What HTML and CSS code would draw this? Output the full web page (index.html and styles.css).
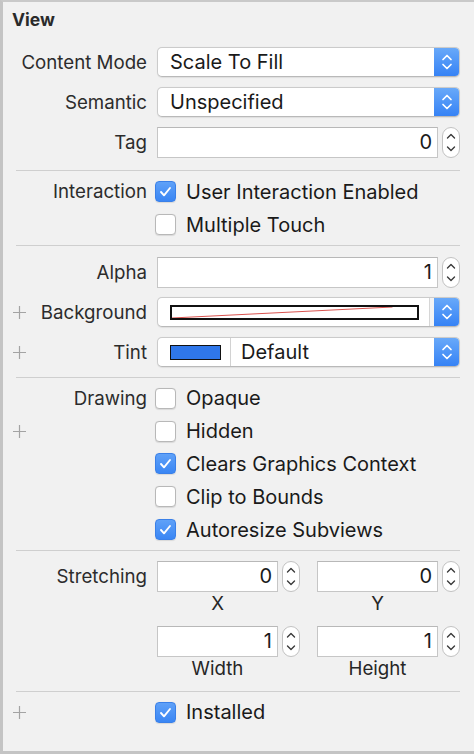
FILE: index.html
```html
<!DOCTYPE html>
<html>
<head>
<meta charset="utf-8">
<link rel="stylesheet" href="styles.css">
</head>
<body>
<div class="panel">
  <div class="header">View</div>

  <div class="section s1">
    <div class="row">
      <div class="label"><span class="label-text">Content Mode</span></div>
      <div class="popup"><span class="popup-text">Scale To Fill</span><span class="popup-arrow"><svg width="26" height="30" viewBox="0 0 26 30"><path d="M9 12.5 L13 8.5 L17 12.5 M9 17.5 L13 21.5 L17 17.5" fill="none" stroke="#fff" stroke-width="1.7" stroke-linecap="round" stroke-linejoin="round"/></svg></span></div>
    </div>
    <div class="row">
      <div class="label"><span class="label-text">Semantic</span></div>
      <div class="popup"><span class="popup-text">Unspecified</span><span class="popup-arrow"><svg width="26" height="30" viewBox="0 0 26 30"><path d="M9 12.5 L13 8.5 L17 12.5 M9 17.5 L13 21.5 L17 17.5" fill="none" stroke="#fff" stroke-width="1.7" stroke-linecap="round" stroke-linejoin="round"/></svg></span></div>
    </div>
    <div class="row">
      <div class="label"><span class="label-text">Tag</span></div>
      <div class="numfield"><span class="field">0</span><span class="stepper"><svg width="18" height="31" viewBox="0 0 18 31"><path d="M5.5 11 L9 7.5 L12.5 11 M5.5 20 L9 23.5 L12.5 20" fill="none" stroke="#3a3a3a" stroke-width="1.4" stroke-linecap="round" stroke-linejoin="round"/></svg></span></div>
    </div>
  </div>
  <div class="sep"></div>

  <div class="section s2">
    <div class="crow">
      <div class="label"><span class="label-text">Interaction</span></div>
      <span class="cb on"><svg width="21" height="21" viewBox="0 0 21 21"><path d="M6 11 L9 14.3 L15 7" fill="none" stroke="#fff" stroke-width="1.9" stroke-linecap="round" stroke-linejoin="round"/></svg></span>
      <span class="ctext">User Interaction Enabled</span>
    </div>
    <div class="crow">
      <div class="label"></div>
      <span class="cb"></span>
      <span class="ctext">Multiple Touch</span>
    </div>
  </div>
  <div class="sep"></div>

  <div class="section s3">
    <div class="row">
      <div class="label"><span class="label-text">Alpha</span></div>
      <div class="numfield"><span class="field">1</span><span class="stepper"><svg width="18" height="31" viewBox="0 0 18 31"><path d="M5.5 11 L9 7.5 L12.5 11 M5.5 20 L9 23.5 L12.5 20" fill="none" stroke="#3a3a3a" stroke-width="1.4" stroke-linecap="round" stroke-linejoin="round"/></svg></span></div>
    </div>
    <div class="row">
      <div class="label"><span class="plus"><svg width="13" height="13" viewBox="0 0 13 13"><path d="M6.5 0 V13 M0 6.5 H13" stroke="#a3a3a3" stroke-width="1.2"/></svg></span><span class="label-text">Background</span></div>
      <div class="popup">
        <span class="well"><span class="clear-swatch"><svg width="100%" height="100%" viewBox="0 0 100 10" preserveAspectRatio="none"><line x1="0" y1="10" x2="90" y2="0" stroke="#d9534f" stroke-width="1" vector-effect="non-scaling-stroke"/></svg></span></span>
        <span class="well-gap"></span>
        <span class="popup-arrow"><svg width="26" height="30" viewBox="0 0 26 30"><path d="M9 12.5 L13 8.5 L17 12.5 M9 17.5 L13 21.5 L17 17.5" fill="none" stroke="#fff" stroke-width="1.7" stroke-linecap="round" stroke-linejoin="round"/></svg></span>
      </div>
    </div>
    <div class="row">
      <div class="label"><span class="plus"><svg width="13" height="13" viewBox="0 0 13 13"><path d="M6.5 0 V13 M0 6.5 H13" stroke="#a3a3a3" stroke-width="1.2"/></svg></span><span class="label-text">Tint</span></div>
      <div class="popup">
        <span class="tint-well"><span class="tint-swatch"></span></span>
        <span class="popup-text">Default</span>
        <span class="popup-arrow"><svg width="26" height="30" viewBox="0 0 26 30"><path d="M9 12.5 L13 8.5 L17 12.5 M9 17.5 L13 21.5 L17 17.5" fill="none" stroke="#fff" stroke-width="1.7" stroke-linecap="round" stroke-linejoin="round"/></svg></span>
      </div>
    </div>
  </div>
  <div class="sep"></div>

  <div class="section s4">
    <div class="crow">
      <div class="label"><span class="label-text">Drawing</span></div>
      <span class="cb"></span>
      <span class="ctext">Opaque</span>
    </div>
    <div class="crow">
      <div class="label"><span class="plus"><svg width="13" height="13" viewBox="0 0 13 13"><path d="M6.5 0 V13 M0 6.5 H13" stroke="#a3a3a3" stroke-width="1.2"/></svg></span></div>
      <span class="cb"></span>
      <span class="ctext">Hidden</span>
    </div>
    <div class="crow">
      <div class="label"></div>
      <span class="cb on"><svg width="21" height="21" viewBox="0 0 21 21"><path d="M6 11 L9 14.3 L15 7" fill="none" stroke="#fff" stroke-width="1.9" stroke-linecap="round" stroke-linejoin="round"/></svg></span>
      <span class="ctext">Clears Graphics Context</span>
    </div>
    <div class="crow">
      <div class="label"></div>
      <span class="cb"></span>
      <span class="ctext">Clip to Bounds</span>
    </div>
    <div class="crow">
      <div class="label"></div>
      <span class="cb on"><svg width="21" height="21" viewBox="0 0 21 21"><path d="M6 11 L9 14.3 L15 7" fill="none" stroke="#fff" stroke-width="1.9" stroke-linecap="round" stroke-linejoin="round"/></svg></span>
      <span class="ctext">Autoresize Subviews</span>
    </div>
  </div>
  <div class="sep"></div>

  <div class="section s5">
    <div class="srow">
      <div class="label slabel"><span class="label-text">Stretching</span></div>
      <div class="cell">
        <div class="numfield"><span class="field">0</span><span class="stepper"><svg width="18" height="31" viewBox="0 0 18 31"><path d="M5.5 11 L9 7.5 L12.5 11 M5.5 20 L9 23.5 L12.5 20" fill="none" stroke="#3a3a3a" stroke-width="1.4" stroke-linecap="round" stroke-linejoin="round"/></svg></span></div>
        <div class="caption">X</div>
      </div>
      <div class="cell">
        <div class="numfield"><span class="field">0</span><span class="stepper"><svg width="18" height="31" viewBox="0 0 18 31"><path d="M5.5 11 L9 7.5 L12.5 11 M5.5 20 L9 23.5 L12.5 20" fill="none" stroke="#3a3a3a" stroke-width="1.4" stroke-linecap="round" stroke-linejoin="round"/></svg></span></div>
        <div class="caption">Y</div>
      </div>
    </div>
    <div class="srow">
      <div class="label slabel"></div>
      <div class="cell">
        <div class="numfield"><span class="field">1</span><span class="stepper"><svg width="18" height="31" viewBox="0 0 18 31"><path d="M5.5 11 L9 7.5 L12.5 11 M5.5 20 L9 23.5 L12.5 20" fill="none" stroke="#3a3a3a" stroke-width="1.4" stroke-linecap="round" stroke-linejoin="round"/></svg></span></div>
        <div class="caption">Width</div>
      </div>
      <div class="cell">
        <div class="numfield"><span class="field">1</span><span class="stepper"><svg width="18" height="31" viewBox="0 0 18 31"><path d="M5.5 11 L9 7.5 L12.5 11 M5.5 20 L9 23.5 L12.5 20" fill="none" stroke="#3a3a3a" stroke-width="1.4" stroke-linecap="round" stroke-linejoin="round"/></svg></span></div>
        <div class="caption">Height</div>
      </div>
    </div>
  </div>
  <div class="sep"></div>

  <div class="section s6">
    <div class="crow">
      <div class="label"><span class="plus"><svg width="13" height="13" viewBox="0 0 13 13"><path d="M6.5 0 V13 M0 6.5 H13" stroke="#a3a3a3" stroke-width="1.2"/></svg></span></div>
      <span class="cb on"><svg width="21" height="21" viewBox="0 0 21 21"><path d="M6 11 L9 14.3 L15 7" fill="none" stroke="#fff" stroke-width="1.9" stroke-linecap="round" stroke-linejoin="round"/></svg></span>
      <span class="ctext">Installed</span>
    </div>
  </div>
</div>
</body>
</html>
```

FILE: styles.css
```css
* { box-sizing: border-box; }
body { margin: 0; background: #f0f0f0; }

.panel {
  width: 474px;
  height: 754px;
  background: #f1f1f1;
  border-left: 3px solid #c4c4c4;
  border-top: 2px solid #c9c9c9;
  border-bottom: 3px solid #c4c4c4;
  font-family: Inter, "Noto Sans", sans-serif;
  font-size: 18.7px;
  color: #262626;
  overflow: hidden;
}

.header {
  height: 36px;
  line-height: 36px;
  padding-left: 9px;
  font-weight: 700;
  font-size: 17.5px;
  color: #2a2a2a;
}

.section {
  display: flex;
  flex-direction: column;
  padding-right: 14px;
}
.s1 { padding-top: 9px; padding-bottom: 13px; gap: 10px; }
.s2 { padding-top: 4px; padding-bottom: 4px; }
.s3 { padding-top: 11px; padding-bottom: 10px; gap: 10px; }
.s4 { padding-top: 4px; padding-bottom: 4px; }
.s4 .crow { height: 32.8px; }
.s5 { padding-top: 10px; padding-bottom: 10px; gap: 10px; }
.s6 { padding-top: 4px; }

.sep {
  height: 1px;
  background: #cfcfcf;
  margin: 0 14px 0 13px;
}

.row { display: flex; align-items: center; height: 30px; }
.crow { display: flex; align-items: center; height: 33px; }

.label {
  width: 144px;
  flex: none;
  margin-right: 10px;
  padding-left: 10px;
  display: flex;
  align-items: center;
  color: #2c2c2c;
}
.label-text { margin-left: auto; white-space: nowrap; }
.plus { display: flex; width: 13px; height: 13px; }

/* popup button */
.popup {
  flex: 1;
  height: 30px;
  display: flex;
  align-items: stretch;
  background: #fff;
  border: 1px solid #cbcbcb;
  border-bottom-color: #b9b9b9;
  border-radius: 5px;
  box-shadow: 0 0.5px 1px rgba(0,0,0,0.08);
  overflow: hidden;
}
.popup-text {
  flex: 1;
  padding-left: 12px;
  display: flex;
  align-items: center;
  font-size: 20px;
  color: #1a1a1a;
}
.popup-arrow {
  width: 26px;
  flex: none;
  display: flex;
  align-items: center;
  justify-content: center;
  background: linear-gradient(#6aaaf9, #3481f5);
  margin: -1px -1px -1px 0;
}

/* background color well */
.well {
  flex: 1;
  display: flex;
  align-items: center;
  padding: 0 10px 0 12px;
}
.clear-swatch {
  flex: 1;
  height: 15px;
  border: 2px solid #111;
  background: #fff;
  display: flex;
}
.well-gap {
  width: 5px;
  flex: none;
  background: #f4f4f4;
  border-left: 1px solid #d6d6d6;
}

/* tint well */
.tint-well {
  width: 73px;
  flex: none;
  display: flex;
  align-items: center;
  padding-left: 12px;
  border-right: 1px solid #d2d2d2;
}
.tint-swatch {
  width: 51px;
  height: 15px;
  background: #2f77ea;
  border: 1.5px solid #111;
}
.tint-well + .popup-text { padding-left: 10px; }

/* number field + stepper */
.numfield {
  flex: 1;
  display: flex;
  align-items: center;
  gap: 4px;
}
.field {
  flex: 1;
  height: 31px;
  background: #fff;
  border: 1px solid #c6c6c6;
  border-top-color: #b8b8b8;
  display: flex;
  align-items: center;
  justify-content: flex-end;
  padding-right: 5px;
  font-size: 20px;
  color: #1a1a1a;
}
.stepper {
  width: 18px;
  height: 31px;
  flex: none;
  display: flex;
  background: #fff;
  border: 1px solid #c2c2c2;
  border-radius: 9px;
  overflow: hidden;
}
.stepper svg { margin: -1px; }

/* checkboxes */
.cb {
  width: 21px;
  height: 21px;
  flex: none;
  margin-left: -2px;
  margin-right: 10px;
  border-radius: 4px;
  background: #fff;
  border: 1px solid #b8b8b8;
  box-shadow: 0 0.5px 1px rgba(0,0,0,0.1);
  display: flex;
}
.cb.on {
  background: linear-gradient(#5fa1f8, #3a86f4);
  border-color: #3a80e8;
}
.cb.on svg { margin: -1px; }
.ctext { color: #1a1a1a; white-space: nowrap; font-size: 20px; }

/* stretching */
.srow { display: flex; align-items: flex-start; gap: 17px; }
.srow .label { margin-right: -7px; }
.slabel { height: 31px; }
.cell { width: 143px; display: flex; flex-direction: column; }
.caption {
  width: 121px;
  height: 24px;
  line-height: 24px;
  text-align: center;
  color: #262626;
}
```
